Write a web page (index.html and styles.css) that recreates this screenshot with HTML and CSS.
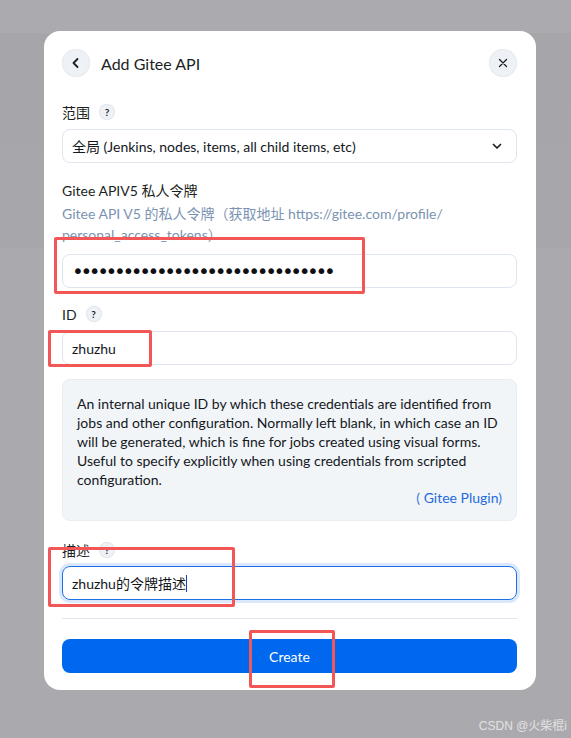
FILE: index.html
```html
<!DOCTYPE html>
<html lang="zh">
<head>
<meta charset="utf-8">
<title>Add Gitee API</title>
<link rel="stylesheet" href="styles.css">
</head>
<body>
<div class="page">
  <div class="modal">
    <div class="header">
      <button class="round-btn" aria-label="back">
        <svg width="14" height="14" viewBox="0 0 14 14"><path d="M8.5 3 L4.5 7 L8.5 11" fill="none" stroke="#1c1f24" stroke-width="1.8" stroke-linecap="round" stroke-linejoin="round"/></svg>
      </button>
      <div class="title">Add Gitee API</div>
      <div class="spacer"></div>
      <button class="round-btn" aria-label="close">
        <svg width="14" height="14" viewBox="0 0 14 14"><path d="M3.5 3.5 L10.5 10.5 M10.5 3.5 L3.5 10.5" fill="none" stroke="#1c1f24" stroke-width="1.3" stroke-linecap="round"/></svg>
      </button>
    </div>

    <div class="label first"><span>范围</span><span class="q">?</span></div>
    <div class="field select">
      <span>全局 (Jenkins, nodes, items, all child items, etc)</span>
      <svg width="14" height="14" viewBox="0 0 14 14"><path d="M3.5 5.5 L7 9 L10.5 5.5" fill="none" stroke="#1c1f24" stroke-width="1.7" stroke-linecap="round" stroke-linejoin="round"/></svg>
    </div>

    <div class="label token-label"><span>Gitee APIV5 私人令牌</span></div>
    <div class="desc">Gitee API V5 的私人令牌（获取地址 https://gitee.com/profile/<br>personal_access_tokens）</div>
    <div class="field pw"><span class="dots">•••••••••••••••••••••••••••••••</span></div>

    <div class="label id-label"><span>ID</span><span class="q">?</span></div>
    <div class="field"><span>zhuzhu</span></div>

    <div class="help">
      <p>An internal unique ID by which these credentials are identified from jobs and other configuration. Normally left blank, in which case an ID will be generated, which is fine for jobs created using visual forms. Useful to specify explicitly when using credentials from scripted configuration.</p>
      <div class="plugin">( <span class="link">Gitee Plugin</span>)</div>
    </div>

    <div class="label desc-label"><span>描述</span><span class="q">?</span></div>
    <div class="field focus"><span>zhuzhu的令牌描述</span><span class="caret"></span></div>

    <div class="divider"></div>
    <button class="create">Create</button>
  </div>

  <div class="mark m1"></div>
  <div class="mark m2"></div>
  <div class="mark m3"></div>
  <div class="mark m4"></div>

  <div class="watermark">CSDN @火柴棍i</div>
</div>
</body>
</html>
```

FILE: styles.css
```css
html, body {
  margin: 0;
  padding: 0;
}
body {
  width: 571px;
  height: 738px;
  overflow: hidden;
  font-family: Lato, "Noto Sans CJK SC", sans-serif;
  color: #1c1f24;
  background: linear-gradient(to bottom,
    #abaaaf 0, #abaaaf 33px,
    #a6a5aa 33px, #a7a6ab 248px,
    #aaa9ae 248px, #aaa9ae 738px);
}
.page {
  position: relative;
  width: 571px;
  height: 738px;
  padding-top: 31px;
  box-sizing: border-box;
}
.modal {
  margin-left: 44px;
  width: 492px;
  height: 659px;
  box-sizing: border-box;
  background: #ffffff;
  border-radius: 16px;
  padding: 18px 19px 0 18px;
  display: flex;
  flex-direction: column;
}
.header {
  display: flex;
  align-items: center;
  height: 28px;
}
.round-btn {
  width: 28px;
  height: 28px;
  border-radius: 50%;
  border: none;
  background: #eef1f5;
  box-shadow: inset 0 0 0 1px #e6eaef;
  display: flex;
  align-items: center;
  justify-content: center;
  padding: 0;
}
.title {
  margin-left: 11px;
  font-size: 16px;
  color: #1c1f24;
}
.spacer { flex: 1; }

.label {
  display: flex;
  align-items: center;
  height: 20px;
  margin-top: 18px;
  margin-bottom: 7px;
  font-size: 14px;
}
.label.first { margin-top: 25px; }
.label.token-label { margin-top: 17px; }
.label.id-label { margin-top: 16px; }
.label.desc-label { margin-top: 19px; margin-bottom: 6px; }
.q {
  width: 16px;
  height: 16px;
  border-radius: 50%;
  background: #eef1f5;
  box-shadow: inset 0 0 0 1px #e3e7ec;
  font-size: 10px;
  font-weight: bold;
  display: inline-flex;
  align-items: center;
  justify-content: center;
  margin-left: 9px;
  color: #1f2329;
}
.desc {
  margin-top: -4px;
  font-size: 14px;
  line-height: 21px;
  color: #7b93b3;
  margin-bottom: 9px;
}
.field {
  height: 34px;
  flex: none;
  box-sizing: border-box;
  border: 1px solid #dfe5ec;
  border-radius: 8px;
  display: flex;
  align-items: center;
  padding: 0 9px;
  font-size: 14px;
  color: #14171c;
}
.select {
  justify-content: space-between;
  padding-right: 12px;
}
.dots {
  font-family: "DejaVu Sans", sans-serif;
  font-size: 20px;
  letter-spacing: -3.4px;
  color: #0d0f13;
  line-height: 1;
}
.focus {
  border: 1px solid #1b6fe6;
  box-shadow: 0 0 0 3px #dbe8fb;
}
.caret {
  display: inline-block;
  width: 1px;
  height: 17px;
  background: #1c3fae;
}
.help {
  margin-top: 14px;
  background: #f2f5f8;
  border: 1px solid #e9edf2;
  border-radius: 8px;
  height: 142px;
  flex: none;
  box-sizing: border-box;
  padding: 14px 14px 0 14px;
  font-size: 14px;
  line-height: 19px;
  color: #15181d;
}
.help p {
  margin: 0;
}
.plugin {
  text-align: right;
  color: #3a7ce0;
  margin-top: -1px;
}
.link { color: #1d6be0; }
.divider {
  margin-top: 18px;
  height: 1px;
  flex: none;
  background: #dfe5ec;
}
.create {
  margin-top: 20px;
  height: 34px;
  flex: none;
  border: none;
  border-radius: 8px;
  background: #0068ef;
  color: #ffffff;
  font-family: Lato, sans-serif;
  font-size: 14px;
}
.mark {
  position: absolute;
  border: 3px solid #f25656;
  border-radius: 2px;
  box-sizing: border-box;
}
.m1 { left: 54px; top: 237px; width: 311px; height: 57px; }
.m2 { left: 48px; top: 330px; width: 104px; height: 37px; }
.m3 { left: 48px; top: 547px; width: 187px; height: 60px; }
.m4 { left: 249px; top: 630px; width: 86px; height: 58px; }
.watermark {
  position: absolute;
  right: 4px;
  top: 716px;
  font-size: 12px;
  color: #e2e2e2;
  font-family: "Liberation Sans", "Noto Sans CJK SC", sans-serif;
}
```
